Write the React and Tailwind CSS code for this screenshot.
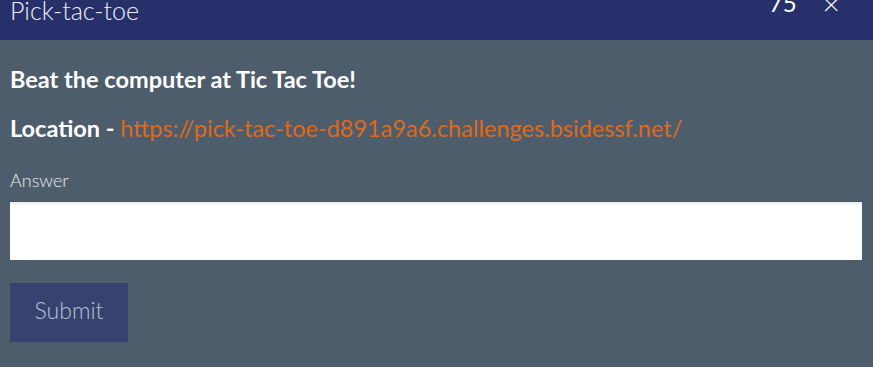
export default function App() {
  return (
    <div className="w-[873px] h-[367px] overflow-hidden bg-[#4e5d6c] font-['Lato','Noto_Sans',sans-serif]">
      <div className="h-[40px] bg-[#27306a] flex items-start justify-between pl-[10px] pr-[33px] overflow-hidden">
        <div className="text-[25px] leading-[1.2] font-light text-[#eef0f6] mt-[-5px]">Pick-tac-toe</div>
        <div className="flex items-start gap-[26px] text-white mt-[-9px]">
          <span className="text-[24px] leading-[24px] font-normal">75</span>
          <span className="text-[30px] leading-[24px] font-light">×</span>
        </div>
      </div>
      <div className="px-[10px]">
        <p className="mt-[25px] text-[23.5px] leading-[1.2] font-bold text-white">Beat the computer at Tic Tac Toe!</p>
        <p className="mt-[21px] text-[23.5px] leading-[1.2] text-white">
          <span className="font-bold">Location - </span>
          <a className="text-[#df691a]">https://pick-tac-toe-d891a9a6.challenges.bsidessf.net/</a>
        </p>
        <div className="mt-[28px] text-[18px] leading-[1.2] font-light text-[#ebebeb]">Answer</div>
        <input className="mt-[10px] block w-[852px] h-[58px] bg-white shadow-[inset_0_2px_2px_rgba(0,0,0,0.08)] outline-none" />
        <button className="mt-[23px] w-[118px] h-[59px] pb-[4px] bg-[#37426f] text-[23px] leading-[1.2] font-light text-[#b9c0d6]">Submit</button>
      </div>
    </div>
  );
}
